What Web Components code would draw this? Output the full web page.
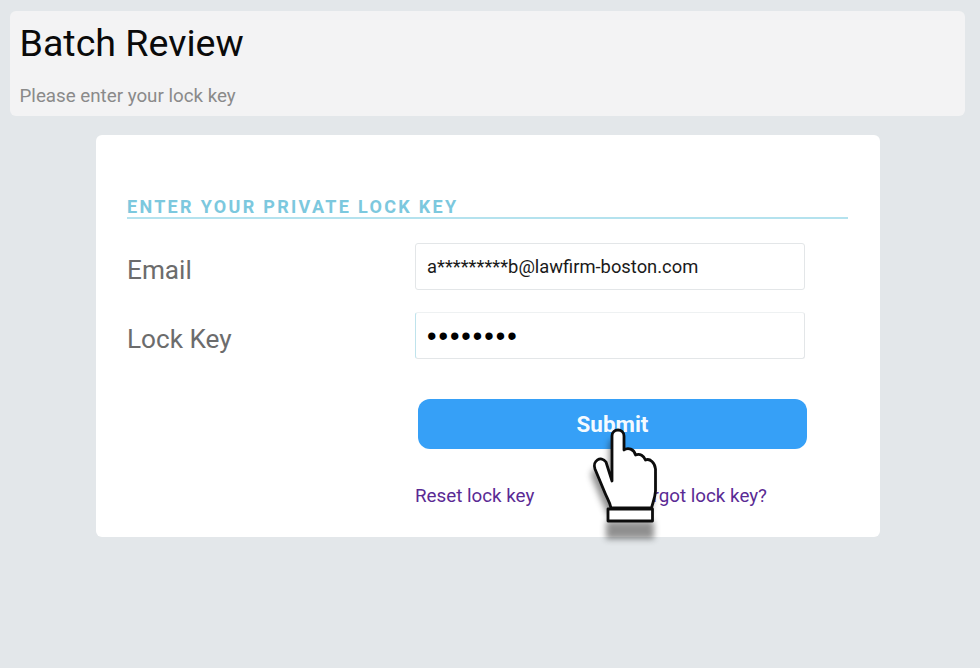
<!DOCTYPE html>
<html lang="en">
<head>
<meta charset="utf-8">
<title>Batch Review</title>
<style>
html,body{margin:0;padding:0;height:100%}
body{background:#e3e7ea;font-family:Roboto,"Liberation Sans",sans-serif;overflow:hidden;position:relative}
</style>
</head>
<body>
<page-shell>
  <page-header title="Batch Review" subtitle="Please enter your lock key"></page-header>
  <login-card heading="ENTER YOUR PRIVATE LOCK KEY">
    <form-row label="Email"><field-box value="a*********b@lawfirm-boston.com"></field-box></form-row>
    <form-row label="Lock Key"><field-box value="••••••••" secret focused></field-box></form-row>
    <submit-button>Submit</submit-button>
    <link-row slot="links" start="Reset lock key" end="Forgot lock key?"></link-row>
  </login-card>
</page-shell>
<hand-cursor></hand-cursor>
<script>
function def(name, css, html){
  customElements.define(name, class extends HTMLElement{
    connectedCallback(){
      if(this.shadowRoot) return;
      const r=this.attachShadow({mode:'open'});
      const attr=k=>this.getAttribute(k)||'';
      r.innerHTML='<style>'+css+'</style>'+html(attr,this);
    }
  });
}
def('page-shell',
 ':host{display:flex;flex-direction:column;padding:11px 15px 0 10px}',
 ()=>'<slot></slot>');
def('page-header',
 `:host{display:block;height:105px;box-sizing:border-box;background:#f3f3f4;border-radius:6px;padding:10px 10px 0 9.5px;margin-bottom:19px}
  h1{margin:0;font:400 37.6px/45px Roboto,sans-serif;color:#0a0a0a}
  p{margin:18px 0 0;font:400 18.75px/24px Roboto,sans-serif;color:#8a8a8a}`,
 a=>`<h1>${a('title')}</h1><p>${a('subtitle')}</p>`);
def('login-card',
 `:host{display:block;width:784px;height:402px;box-sizing:border-box;margin-left:86px;background:#fff;border-radius:6px;padding:61px 32px 0 31px}
  h2{margin:0 0 24px;font:700 18px/21px Roboto,sans-serif;letter-spacing:2.3px;color:#7cc8de;border-bottom:2px solid #b4e2ee;box-sizing:border-box;height:23px}
  .links{display:block;margin-top:35px}`,
 a=>`<h2>${a('heading')}</h2><slot></slot><div class="links"><slot name="links"></slot></div>`);
def('form-row',
 `:host{display:grid;grid-template-columns:288px 390px;margin-bottom:15px;align-items:start}
  label{font:400 26.2px/54px Roboto,sans-serif;color:#6c6c6c}`,
 a=>`<label>${a('label')}</label><slot></slot>`);
def('field-box',
 `:host{display:flex;align-items:center;box-sizing:border-box;height:47px;background:#fff;border:1px solid #e3e6e8;border-radius:3px;padding:0 11px;font:400 18.35px/24px Roboto,sans-serif;color:#1a1a1a}
  :host([focused]){border-left-color:#bfe3ec;border-top-color:#eef1f2}
  :host([secret]){font:400 27px/24px "Liberation Sans",sans-serif;letter-spacing:2px;color:#000;padding-top:1px}`,
 a=>`<span>${a('value')}</span>`);
def('submit-button',
 `:host{display:flex;align-items:center;justify-content:center;box-sizing:border-box;width:389px;height:50px;margin:33px 0 0 291px;background:#36a0f7;border-radius:12px;color:#f4faff;font:700 22.4px/26px Roboto,sans-serif;cursor:pointer}`,
 ()=>'<slot></slot>');
def('link-row',
 `:host{display:flex;justify-content:space-between;box-sizing:border-box;width:352px;margin-left:288px;font:400 18.8px/24px Roboto,sans-serif;color:#5a2a94}
  a{color:inherit;text-decoration:none}`,
 a=>`<a href="#">${a('start')}</a><a href="#">${a('end')}</a>`);
def('hand-cursor',
 `:host{position:absolute;left:590px;top:425px;width:75px;height:120px;display:block;pointer-events:none}
  svg{display:block;overflow:visible}
  .s{filter:blur(3px);opacity:.5}`,
 ()=>{
  const hand='M22 56 L22 11 C22 3 34 3 34 11 L34 25 C38 22 44 24 45.5 30 C50 28 54 31 55.5 35 C60 33 65 38 65.5 44 L65.5 66 C65 73 63 77 61.5 83 L21 83 C20 77 17 73 15 68 L5 44 C2 36 11 30 16 37 Z';
  return `<svg width="75" height="120" viewBox="0 0 75 120" aria-hidden="true">
  <g class="s" fill="#222"><path d="${hand}" transform="translate(-3 9)"/><rect x="16" y="96" width="48" height="18"/></g>
  <path d="${hand}" fill="#fff" stroke="#0c0c0c" stroke-width="2.8" stroke-linejoin="round"/>
  <path d="M18 84 H62.5 V96 H18 Z" fill="#fff" stroke="#0c0c0c" stroke-width="2.8" stroke-linejoin="round"/>
  </svg>`;
 });
</script>
</body>
</html>
